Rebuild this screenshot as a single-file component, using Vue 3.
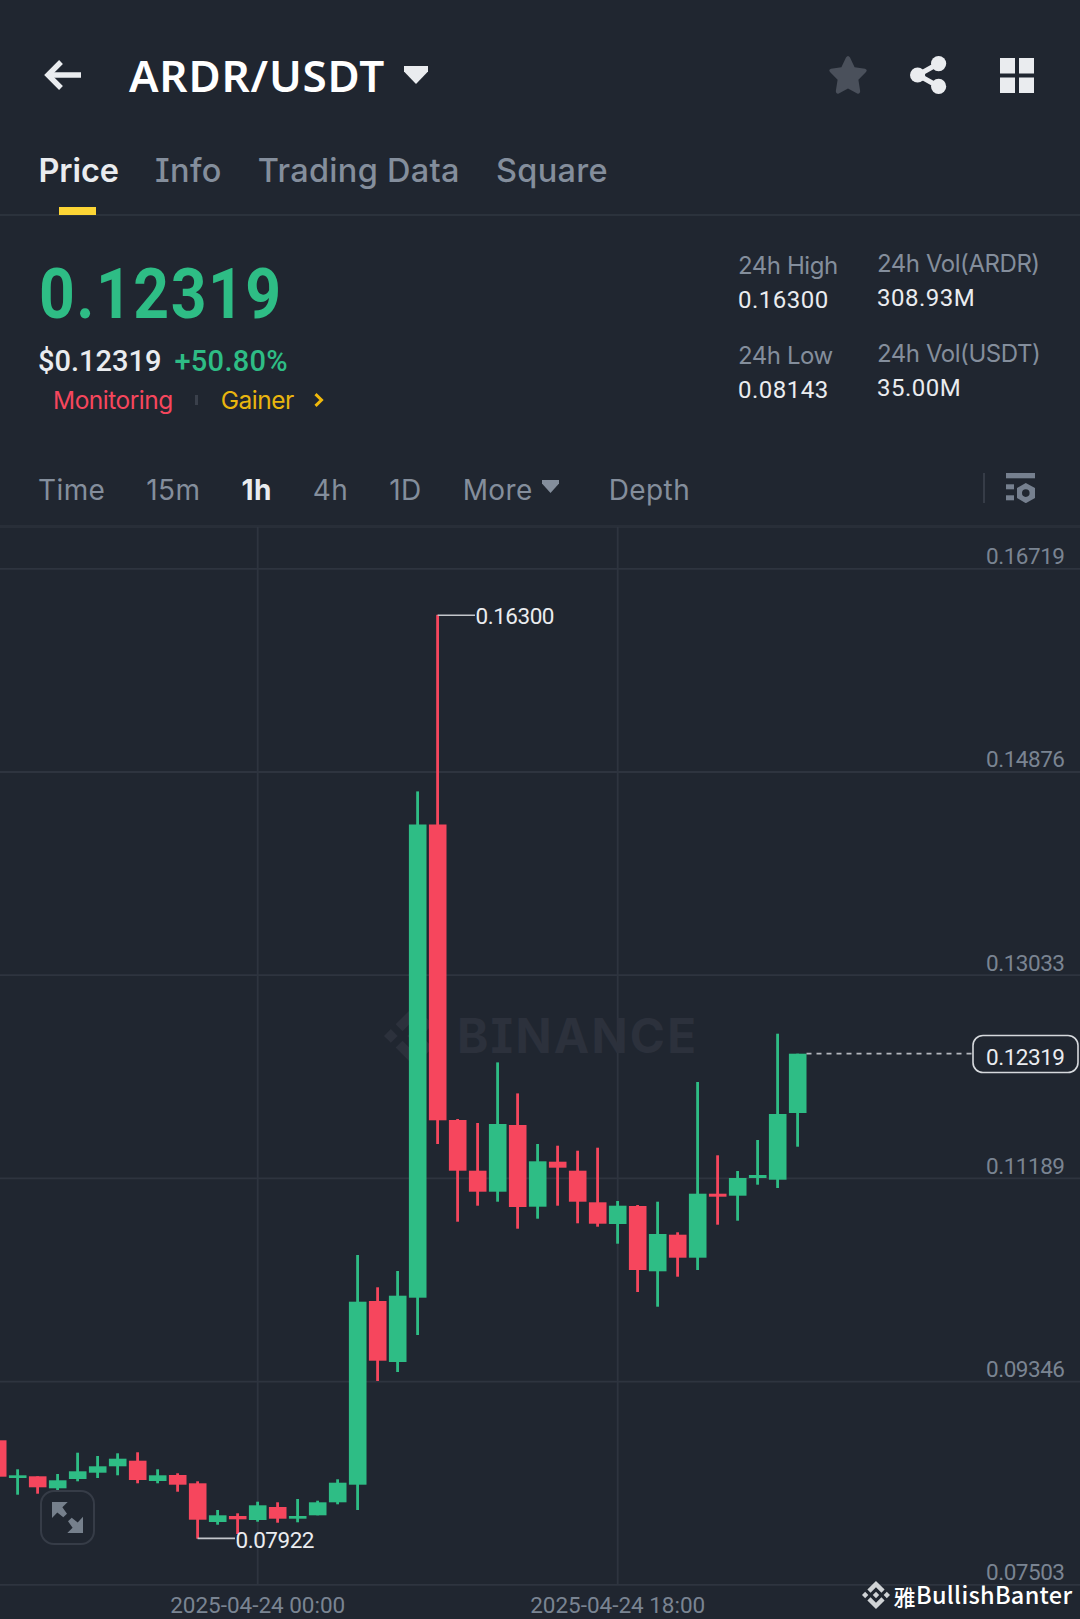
<template>
  <div class="app">
    <header class="header">
      <svg class="icon-back" viewBox="0 0 38 30" fill="none" stroke="currentColor" stroke-width="5.4">
        <path d="M37 15H4" />
        <path d="M17 2L4 15L17 28" />
      </svg>
      <h1 class="pair">ARDR/USDT</h1>
      <svg class="icon-caret" viewBox="0 0 24 18" fill="currentColor">
        <path d="M0 0H24V5.5L12 18L0 5.5Z" />
      </svg>
      <div class="actions">
        <svg class="icon-star" viewBox="0 0 38 38" fill="currentColor">
          <path d="M17 1.6Q19 -1.4 21 1.6L25.6 11.3L36 12.8Q38.8 13.6 37 16L29.4 23.8L31.2 35.2Q31 38.4 28.2 37.4L19 32.5L9.8 37.4Q7 38.4 6.8 35.2L8.6 23.8L1 16Q-.8 13.6 2 12.8L12.4 11.3Z" />
        </svg>
        <svg class="icon-share" viewBox="0 0 37 38" fill="currentColor">
          <path d="M28.5 7.5L8 19L28.5 30.5" fill="none" stroke="currentColor" stroke-width="5" />
          <circle cx="28.6" cy="7.6" r="7.6" />
          <circle cx="7.6" cy="19" r="7.6" />
          <circle cx="28.6" cy="30.4" r="7.6" />
        </svg>
        <svg class="icon-grid" viewBox="0 0 34 35" fill="currentColor">
          <rect width="15" height="15.5" />
          <rect x="19" width="15" height="15.5" />
          <rect y="19.5" width="15" height="15.5" />
          <rect x="19" y="19.5" width="15" height="15.5" />
        </svg>
      </div>
    </header>

    <nav class="tabs">
      <button
        v-for="tab in tabs"
        :key="tab"
        class="tab"
        :class="{ 'is-active': activeTab === tab }"
        @click="activeTab = tab"
      >
        {{ tab }}
      </button>
    </nav>

    <section class="summary">
      <div class="quote">
        <div class="last-price">0.12319</div>
        <div class="quote-row">
          <span class="fiat">$0.12319</span>
          <span class="change">+50.80%</span>
        </div>
        <div class="tags">
          <span class="tag-monitoring">Monitoring</span>
          <i class="tag-divider"></i>
          <span class="tag-gainer">Gainer</span>
          <svg class="icon-chevron" viewBox="0 0 10 14" fill="none" stroke="currentColor" stroke-width="3">
            <path d="M1.5 1.2L7.5 7L1.5 12.8" />
          </svg>
        </div>
      </div>
      <div class="stats">
        <div v-for="(column, i) in stats" :key="i" class="stats-column">
          <div v-for="stat in column" :key="stat.label" class="stat">
            <div class="stat-label">{{ stat.label }}</div>
            <div class="stat-value">{{ stat.value }}</div>
          </div>
        </div>
      </div>
    </section>

    <nav class="intervals">
      <button
        v-for="item in intervals"
        :key="item"
        class="interval"
        :class="{ 'is-active': activeInterval === item }"
        @click="activeInterval = item"
      >
        {{ item }}
      </button>
      <button class="interval more">
        More
        <svg viewBox="0 0 17 13" fill="currentColor">
          <path d="M0 0H17V3.5L8.5 13L0 3.5Z" />
        </svg>
      </button>
      <button class="interval">Depth</button>
      <div class="settings">
        <svg viewBox="0 0 29 30" fill="currentColor">
          <rect width="29" height="5.3" />
          <rect y="11.3" width="8" height="5" />
          <rect y="22.3" width="8" height="5" />
          <path fill-rule="evenodd" d="M19.8 10L29 15V25L19.8 30.2L11 25V15ZM19.8 16.3A3.8 3.8 0 1 0 19.8 23.9A3.8 3.8 0 1 0 19.8 16.3Z" />
        </svg>
      </div>
    </nav>

    <!-- chart units are page pixels, the top edge sits at y = 527 -->
    <svg class="chart" viewBox="0 527 1080 1092">
      <g class="grid">
        <line v-for="tick in priceTicks" :key="tick.label" x1="0" x2="1080" :y1="tick.y" :y2="tick.y" />
        <line v-for="tick in timeTicks" :key="tick.label" y1="527" y2="1584" :x1="tick.x" :x2="tick.x" />
      </g>

      <g class="brand">
        <g transform="translate(384 1005.7) scale(0.478)">
          <path v-for="d in logoPaths" :key="d" :d="d" />
        </g>
        <text x="457" y="1052.6" textLength="239">BINANCE</text>
      </g>

      <g v-for="(candle, i) in candles" :key="i" :class="candle[0] === 'u' ? 'up' : 'down'">
        <rect :x="candleX(i) - 1.4" :y="candle[1]" width="2.8" :height="candle[4] - candle[1]" />
        <rect :x="candleX(i) - 8.7" :y="candle[2]" width="17.6" :height="candle[3] - candle[2]" />
      </g>

      <g class="marker">
        <line x1="437.6" x2="475" y1="615.2" y2="615.2" />
        <text x="475.5" y="624" textLength="79">0.16300</text>
        <line x1="197.6" x2="235" y1="1538.4" y2="1538.4" />
        <text x="235.5" y="1547.7" textLength="79">0.07922</text>
      </g>

      <g class="axis">
        <text v-for="tick in priceTicks" :key="tick.label" x="986" :y="tick.y - 4.7" textLength="79">{{ tick.label }}</text>
        <text v-for="tick in timeTicks" :key="tick.label" :x="tick.x - 87.5" y="1612.6" textLength="175">{{ tick.label }}</text>
      </g>

      <line class="last-line" x1="806.5" x2="972" y1="1053.7" y2="1053.7" />
      <rect class="last-box" x="973" y="1035.5" width="105" height="37" rx="10" />
      <text class="last-text" x="986" y="1064.8" textLength="79">0.12319</text>

      <g class="expand">
        <rect x="41" y="1491" width="53" height="53" rx="13" />
        <path d="M52 1502H67.7L62.4 1507.3L67 1513.8L63.3 1517.3L57.3 1512.5L52 1518Z" />
        <path d="M83 1533H67.3L72.6 1527.7L68 1521.2L71.7 1517.7L77.7 1522.5L83 1516.7Z" />
      </g>

      <g class="credit">
        <g transform="translate(862 1581) scale(0.221)">
          <path v-for="d in logoPaths" :key="d" :d="d" />
        </g>
        <text class="credit-prefix" x="893.5" y="1606">雅</text>
        <text x="916" y="1604" textLength="156">BullishBanter</text>
      </g>
    </svg>
  </div>
</template>

<script setup>
import { ref } from 'vue'

const tabs = ['Price', 'Info', 'Trading Data', 'Square']
const activeTab = ref('Price')

const intervals = ['Time', '15m', '1h', '4h', '1D']
const activeInterval = ref('1h')

const stats = [
  [
    { label: '24h High', value: '0.16300' },
    { label: '24h Low', value: '0.08143' }
  ],
  [
    { label: '24h Vol(ARDR)', value: '308.93M' },
    { label: '24h Vol(USDT)', value: '35.00M' }
  ]
]

const priceTicks = ['0.16719', '0.14876', '0.13033', '0.11189', '0.09346', '0.07503'].map((label, i) => ({
  label,
  y: 568.8 + i * 203.2
}))

const timeTicks = [
  { label: '2025-04-24 00:00', x: 257.7 },
  { label: '2025-04-24 18:00', x: 617.7 }
]

const logoPaths = [
  'M38.7 53.2L63.3 28.6L87.9 53.2L102.2 38.9L63.3 0L24.4 38.9Z',
  'M0 63.3L14.3 49L28.6 63.3L14.3 77.6Z',
  'M38.7 73.4L63.3 98L87.9 73.4L102.2 87.7L63.3 126.6L24.4 87.7Z',
  'M98 63.3L112.3 49L126.6 63.3L112.3 77.6Z',
  'M77.8 63.3L63.3 48.8L48.8 63.3L63.3 77.8Z'
]

// [direction, wick top, body top, body bottom, wick bottom]
const candles = [
  ['d', 1440.3, 1440.3, 1476.7, 1476.7],
  ['u', 1469.3, 1475.3, 1478, 1494.7],
  ['d', 1476.3, 1476.3, 1487.3, 1493.7],
  ['u', 1474, 1480.3, 1488.3, 1490],
  ['u', 1452.7, 1471.3, 1479, 1481.3],
  ['u', 1456, 1466.3, 1472.7, 1478],
  ['u', 1453.3, 1458.7, 1466.3, 1475.3],
  ['d', 1452.3, 1460.7, 1480, 1483.3],
  ['u', 1469.3, 1475.3, 1481, 1483.3],
  ['d', 1473.3, 1475, 1484.7, 1491.7],
  ['d', 1481.3, 1483.3, 1519.7, 1538.7],
  ['u', 1510, 1515.3, 1522, 1524.7],
  ['d', 1513.3, 1516, 1519.3, 1534],
  ['u', 1501.7, 1505.3, 1520, 1521.7],
  ['d', 1502.3, 1507, 1518.7, 1522.7],
  ['u', 1499, 1516, 1518.7, 1522.3],
  ['u', 1500.7, 1502.3, 1515.3, 1515.3],
  ['u', 1479.3, 1482.7, 1502.3, 1504.3],
  ['u', 1255, 1301.7, 1484.7, 1510],
  ['d', 1287.3, 1301, 1360.7, 1381],
  ['u', 1271, 1295.7, 1362, 1372],
  ['u', 791.4, 824.5, 1297.7, 1335],
  ['d', 614.8, 824.5, 1120.3, 1144],
  ['d', 1119, 1120, 1170.7, 1221.7],
  ['d', 1123, 1170.7, 1191.7, 1205.7],
  ['u', 1062.4, 1124, 1191.7, 1201.7],
  ['d', 1093.4, 1125, 1207, 1228.7],
  ['u', 1144, 1161.3, 1206.7, 1218.7],
  ['d', 1145.7, 1161.7, 1167.7, 1205.7],
  ['d', 1150.7, 1170.7, 1201.7, 1223.3],
  ['d', 1147.7, 1202.3, 1223.7, 1226.7],
  ['u', 1201, 1205.7, 1224, 1243.7],
  ['d', 1205, 1206, 1270, 1292],
  ['u', 1201.7, 1234, 1271.3, 1306.7],
  ['d', 1232.3, 1234.7, 1257.7, 1276.7],
  ['u', 1082, 1193.7, 1257.7, 1270],
  ['d', 1155.3, 1193.7, 1196.7, 1224.7],
  ['u', 1171, 1178, 1195.7, 1220.7],
  ['u', 1140, 1175, 1178, 1184.7],
  ['u', 1033.7, 1114, 1179.7, 1188],
  ['u', 1053.7, 1053.7, 1113, 1146.7]
]

function candleX(index) {
  return index * 20 - 2.4
}
</script>

<style>
body {
  background: #202630;
}
</style>

<style scoped>
.app {
  width: 1080px;
  height: 1619px;
  display: flex;
  flex-direction: column;
  overflow: hidden;
  background: #202630;
  color: #eaecef;
  font-family: Inter, "Noto Sans", sans-serif;
  font-feature-settings: "cv08";
}

button {
  padding: 0;
  border: 0;
  background: none;
  color: #848e9c;
  font: inherit;
  letter-spacing: inherit;
  white-space: nowrap;
  cursor: pointer;
}

.header {
  height: 150px;
  box-sizing: border-box;
  padding: 0 46px 0 44px;
  display: flex;
  align-items: center;
}

.icon-back {
  width: 38px;
  height: 30px;
}

.pair {
  width: 256px;
  margin: 0 0 0 47px;
  font-family: "Noto Sans", sans-serif;
  font-size: 44px;
  line-height: 60px;
  font-weight: 600;
  letter-spacing: 0.8px;
  color: #fff;
  white-space: nowrap;
}

.icon-caret {
  width: 24px;
  height: 18px;
  margin-left: 19px;
}

.actions {
  margin-left: auto;
  display: flex;
  align-items: center;
}

.icon-star {
  width: 38px;
  height: 38px;
  color: #4a505b;
}

.icon-share {
  width: 37px;
  height: 38px;
  margin-left: 43px;
}

.icon-grid {
  width: 34px;
  height: 35px;
  margin-left: 53px;
}

.tabs {
  height: 66px;
  box-sizing: border-box;
  padding-left: 38.5px;
  display: flex;
  gap: 36.2px;
  border-bottom: 2px solid #2b323c;
  letter-spacing: 0.3px;
}

.tab {
  position: relative;
  height: 65px;
  padding-bottom: 23px;
  font-size: 32.5px;
  line-height: 40px;
  font-weight: 500;
}

.tab.is-active {
  color: #eaecef;
  font-weight: 600;
  letter-spacing: -0.1px;
}

.tab.is-active::after {
  content: "";
  position: absolute;
  left: 50%;
  bottom: 0;
  width: 37px;
  height: 8px;
  margin-left: -19.5px;
  background: #fcd535;
}

.summary {
  height: 238px;
  box-sizing: border-box;
  padding: 35px 0 0 38px;
  display: flex;
}

.quote {
  width: 700px;
}

.last-price {
  height: 84px;
  margin: 1px 0 0 1px;
  font-family: Roboto, sans-serif;
  font-size: 71px;
  line-height: 84px;
  font-weight: 700;
  color: #2ebd85;
  letter-spacing: 1.7px;
  transform: scaleX(0.88);
  transform-origin: left;
}

.quote-row {
  display: flex;
  gap: 13px;
  margin-top: 7px;
  font-family: Roboto, sans-serif;
  font-size: 29px;
  line-height: 36px;
  font-weight: 500;
}

.change {
  color: #2ebd85;
  letter-spacing: 0.3px;
}

.tags {
  display: flex;
  align-items: center;
  margin: 4px 0 0 15px;
  font-size: 24.5px;
  line-height: 34px;
  letter-spacing: -0.5px;
}

.tag-monitoring {
  color: #f6465d;
}

.tag-divider {
  width: 3px;
  height: 10px;
  margin: 0 23px 0 22px;
  background: #3a404b;
}

.tag-gainer {
  color: #e9b50e;
}

.icon-chevron {
  width: 10px;
  height: 14px;
  margin-left: 20px;
  color: #f0b90b;
}

.stats {
  display: flex;
  margin-top: -2px;
}

.stats-column {
  width: 139px;
}

.stats-column + .stats-column {
  margin-top: -2px;
}

.stat {
  height: 90px;
}

.stat-label {
  font-size: 24px;
  line-height: 34px;
  letter-spacing: -0.45px;
  color: #848e9c;
  white-space: nowrap;
}

.stat-value {
  font-family: Roboto, sans-serif;
  font-size: 24px;
  line-height: 35px;
  letter-spacing: 0.5px;
}

.intervals {
  height: 74px;
  box-sizing: border-box;
  padding: 0 45px 3px 38px;
  display: flex;
  align-items: center;
  border-bottom: 3px solid #282e38;
  letter-spacing: 0.4px;
}

.interval {
  margin: 3px 41px 0 0;
  font-size: 28px;
}

.interval.is-active {
  color: #eaecef;
  font-weight: 700;
}

.more {
  display: flex;
  align-items: center;
  margin-right: 50px;
}

.more svg {
  width: 17px;
  height: 13px;
  margin: -6px 0 0 9px;
}

.settings {
  display: flex;
  margin-left: auto;
  padding-left: 21px;
  border-left: 2px solid #363c47;
  color: #76808f;
}

.settings svg {
  width: 29px;
  height: 30px;
}

.chart {
  display: block;
  flex: none;
  width: 1080px;
  height: 1092px;
  margin-top: -1px;
  font-family: Roboto, sans-serif;
  font-size: 22.5px;
}

.grid line {
  stroke: #2e343f;
  stroke-width: 1.8;
}

.brand {
  fill: #2c313c;
}

.brand text {
  font-family: Inter, sans-serif;
  font-size: 47.5px;
  font-weight: 700;
}

.up {
  fill: #2ebd85;
}

.down {
  fill: #f6465d;
}

.marker line {
  stroke: #c3c6cb;
  stroke-width: 1.6;
}

.marker text,
.last-text {
  fill: #eaecef;
}

.axis text {
  fill: #7a8492;
}

.last-line {
  stroke: #b4b8be;
  stroke-width: 1.8;
  stroke-dasharray: 5 5;
}

.last-box {
  fill: #202630;
  stroke: #d6d9dd;
  stroke-width: 1.6;
}

.expand rect {
  fill: #202630;
  stroke: #363c47;
  stroke-width: 2;
}

.expand path {
  fill: #76808c;
}

.credit {
  fill: #d0d3d6;
  font-family: "Noto Sans CJK SC", sans-serif;
  font-size: 23.5px;
}

.credit text {
  fill: #fff;
  font-weight: 500;
}

.credit .credit-prefix {
  font-size: 22px;
}
</style>
